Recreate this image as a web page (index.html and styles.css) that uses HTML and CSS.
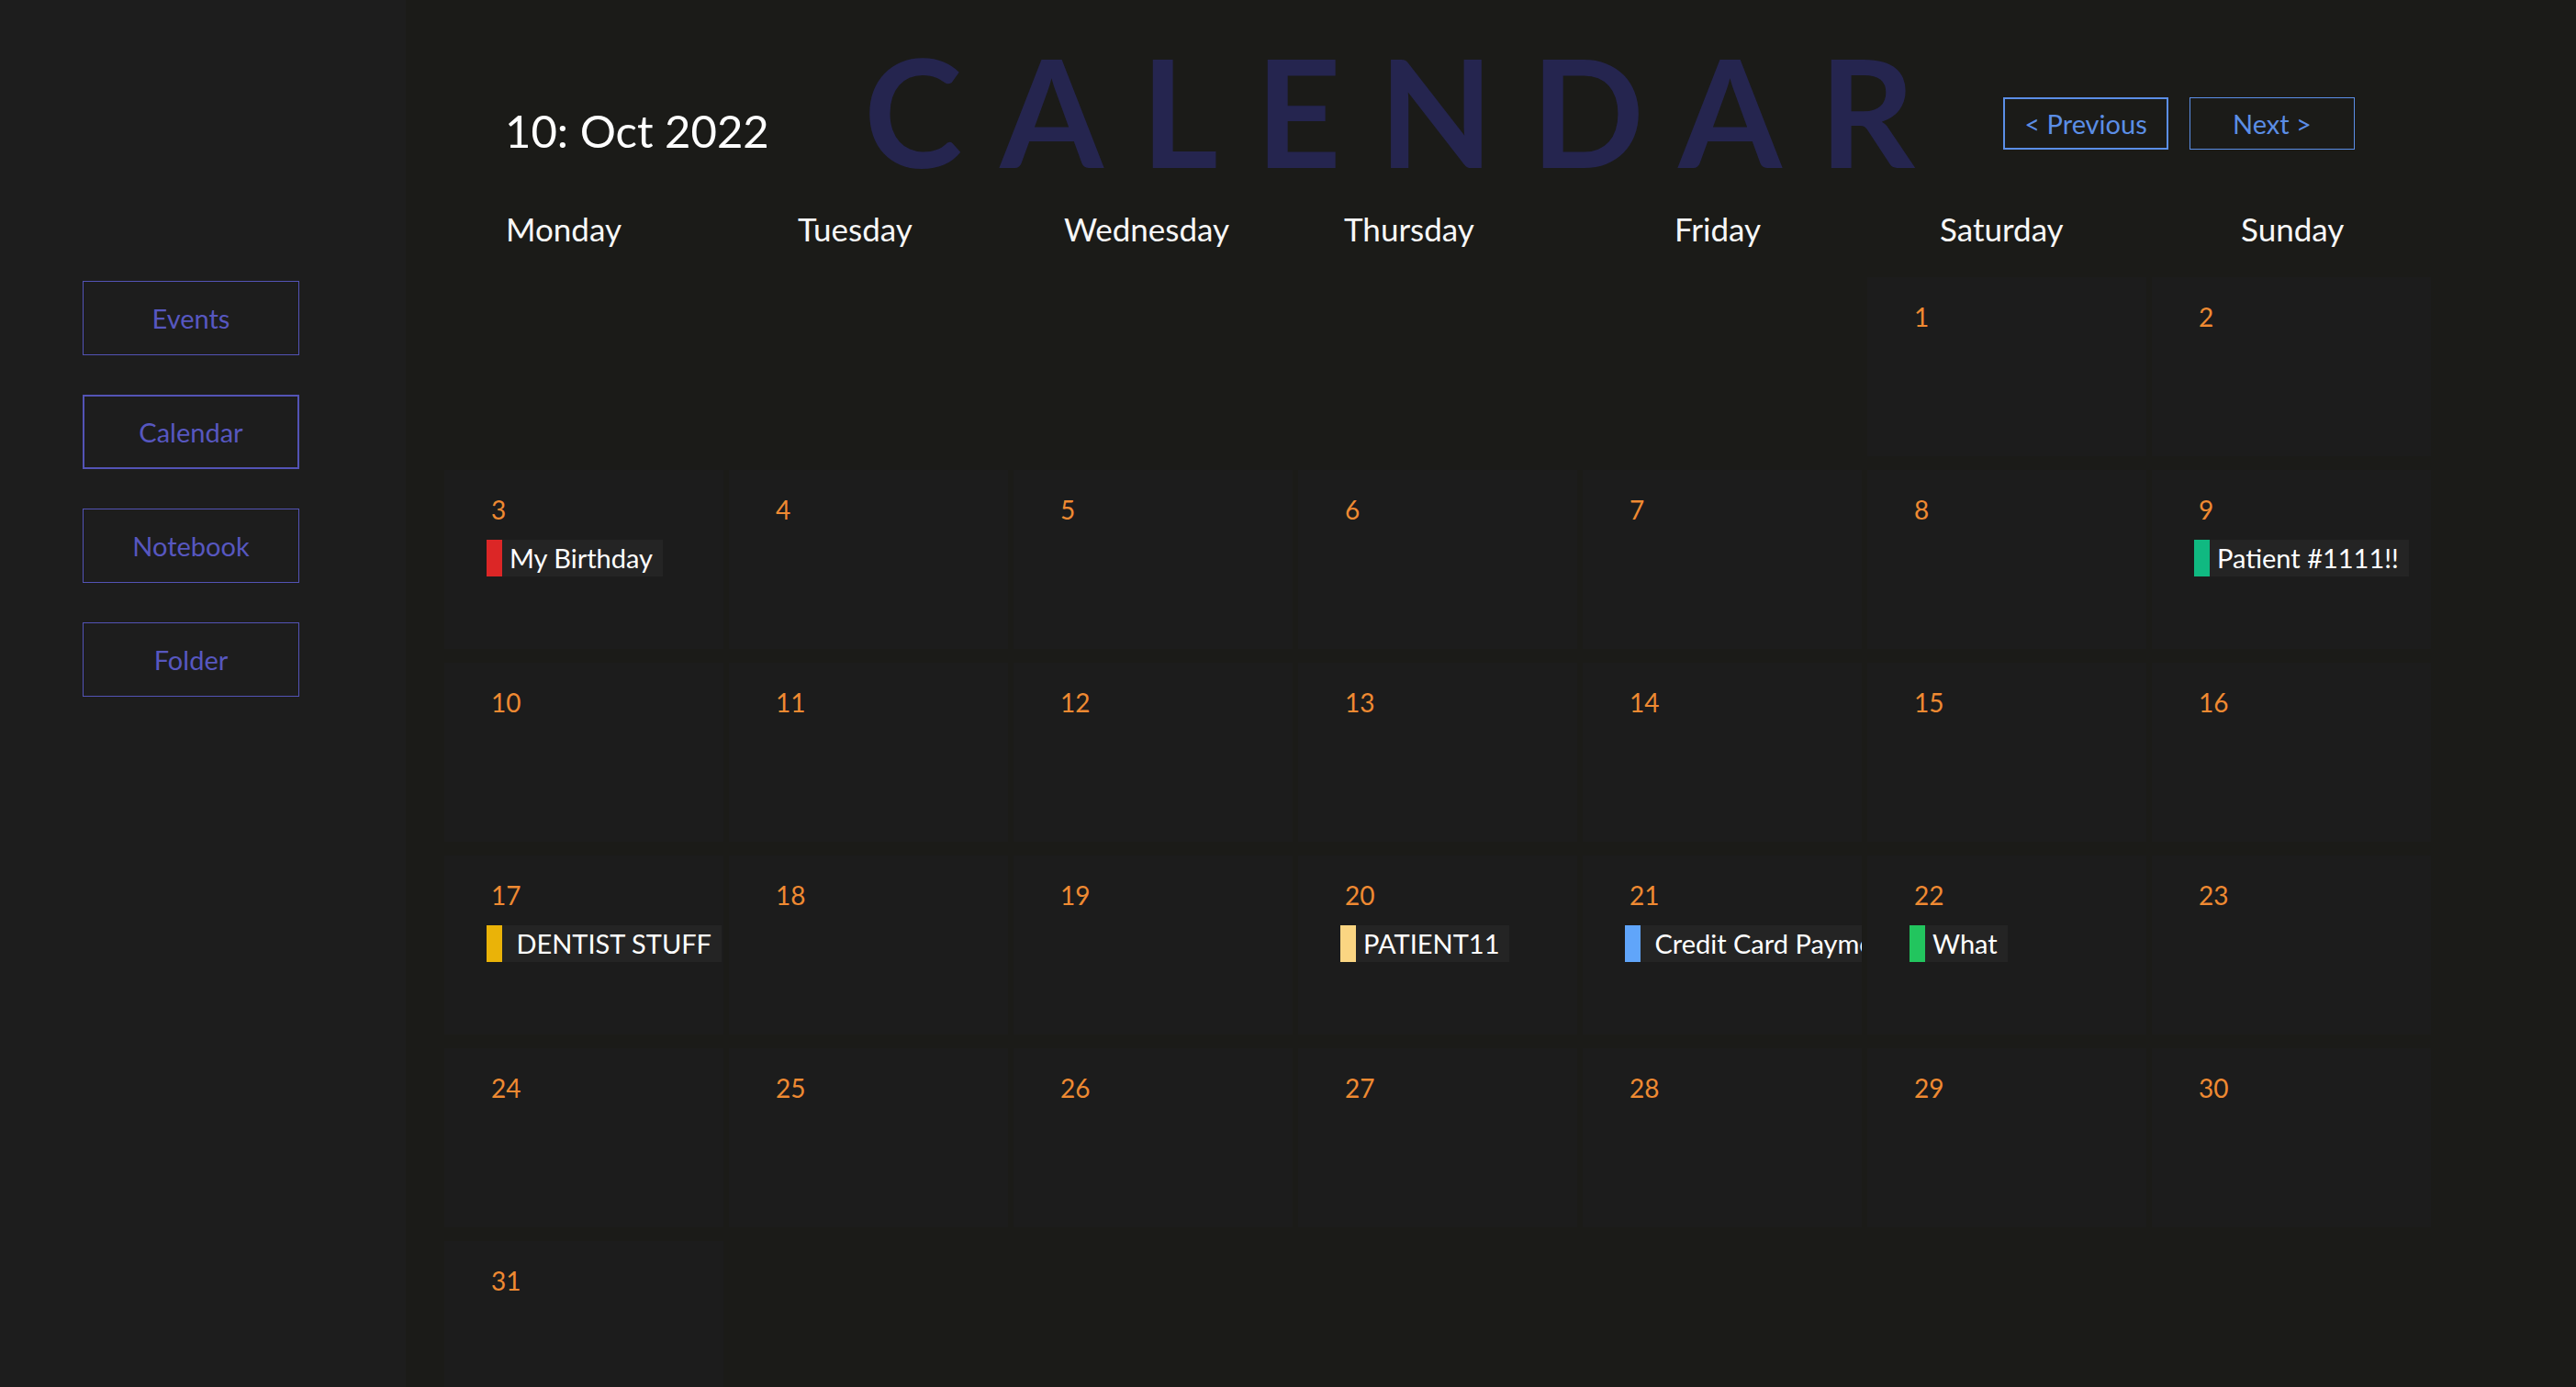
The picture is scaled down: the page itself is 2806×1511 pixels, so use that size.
FILE: index.html
```html
<!DOCTYPE html>
<html lang="en">
<head>
<meta charset="utf-8">
<title>Calendar</title>
<link rel="stylesheet" href="styles.css">
</head>
<body>
<div class="app">
  <aside class="sidebar">
    <button class="nav-btn">Events</button>
    <button class="nav-btn active">Calendar</button>
    <button class="nav-btn">Notebook</button>
    <button class="nav-btn">Folder</button>
  </aside>
  <main class="main">
    <header class="topbar">
      <div class="month">10: Oct 2022</div>
      <div class="brand">CALENDAR</div>
      <div class="pager">
        <button class="pager-btn focused">&lt; Previous</button>
        <button class="pager-btn">Next &gt;</button>
      </div>
    </header>
    <div class="weekdays">
      <div class="wd">Monday</div>
      <div class="wd">Tuesday</div>
      <div class="wd">Wednesday</div>
      <div class="wd">Thursday</div>
      <div class="wd">Friday</div>
      <div class="wd">Saturday</div>
      <div class="wd">Sunday</div>
    </div>
    <div class="grid">
      <div class="blank"></div>
      <div class="blank"></div>
      <div class="blank"></div>
      <div class="blank"></div>
      <div class="blank"></div>
      <div class="cell"><div class="num">1</div></div>
      <div class="cell"><div class="num">2</div></div>

      <div class="cell"><div class="num">3</div><div class="event"><span class="bar red"></span><span class="label">My Birthday</span></div></div>
      <div class="cell"><div class="num">4</div></div>
      <div class="cell"><div class="num">5</div></div>
      <div class="cell"><div class="num">6</div></div>
      <div class="cell"><div class="num">7</div></div>
      <div class="cell"><div class="num">8</div></div>
      <div class="cell"><div class="num">9</div><div class="event"><span class="bar emerald"></span><span class="label">Patient #1111!!</span></div></div>

      <div class="cell"><div class="num">10</div></div>
      <div class="cell"><div class="num">11</div></div>
      <div class="cell"><div class="num">12</div></div>
      <div class="cell"><div class="num">13</div></div>
      <div class="cell"><div class="num">14</div></div>
      <div class="cell"><div class="num">15</div></div>
      <div class="cell"><div class="num">16</div></div>

      <div class="cell"><div class="num">17</div><div class="event"><span class="bar yellow"></span><span class="label"> DENTIST STUFF</span></div></div>
      <div class="cell"><div class="num">18</div></div>
      <div class="cell"><div class="num">19</div></div>
      <div class="cell"><div class="num">20</div><div class="event"><span class="bar amber"></span><span class="label">PATIENT11</span></div></div>
      <div class="cell"><div class="num">21</div><div class="event"><span class="bar blue"></span><span class="label"> Credit Card Payment</span></div></div>
      <div class="cell"><div class="num">22</div><div class="event"><span class="bar green"></span><span class="label">What</span></div></div>
      <div class="cell"><div class="num">23</div></div>

      <div class="cell"><div class="num">24</div></div>
      <div class="cell"><div class="num">25</div></div>
      <div class="cell"><div class="num">26</div></div>
      <div class="cell"><div class="num">27</div></div>
      <div class="cell"><div class="num">28</div></div>
      <div class="cell"><div class="num">29</div></div>
      <div class="cell"><div class="num">30</div></div>

      <div class="cell"><div class="num">31</div></div>
    </div>
  </main>
</div>
</body>
</html>
```
FILE: styles.css
```css
* { box-sizing: border-box; }

html, body {
  margin: 0;
  padding: 0;
  background: #1b1b18;
  font-family: Lato, "Noto Sans", sans-serif;
}

.app {
  display: flex;
  min-height: 100vh;
}

.sidebar {
  width: 442px;
  flex: none;
  background: #1d1d1d;
  padding: 306px 0 0 90px;
  display: flex;
  flex-direction: column;
  align-items: flex-start;
  gap: 43px;
}

.nav-btn {
  width: 236px;
  height: 81px;
  background: transparent;
  border: 1px solid #5353b5;
  color: #5757c0;
  font-family: Lato, "Noto Sans", sans-serif;
  font-size: 29px;
  padding: 0;
}

.nav-btn.active {
  border-width: 2px;
}

.main {
  flex: 1;
  padding-left: 42px;
}

.topbar {
  display: grid;
  grid-template-columns: 457px 1241px auto;
  align-items: start;
  height: 232px;
}

.month {
  padding-left: 66px;
  margin-top: 118px;
  font-size: 49px;
  line-height: 1;
  color: #ffffff;
  white-space: nowrap;
}

.brand {
  margin-top: 40px;
  font-size: 162px;
  font-weight: 700;
  line-height: 1;
  letter-spacing: 41px;
  color: #25254f;
  white-space: nowrap;
}

.pager {
  display: flex;
  gap: 23px;
  margin-top: 106px;
}

.pager-btn {
  width: 180px;
  height: 57px;
  background: transparent;
  border: 1px solid #5b8ee6;
  color: #5b8ee6;
  font-family: Lato, "Noto Sans", sans-serif;
  font-size: 29px;
  padding: 0;
}

.pager-btn.focused {
  border-width: 2px;
}

.weekdays {
  display: grid;
  grid-template-columns: repeat(7, 304px);
  column-gap: 6px;
  height: 70px;
  font-size: 35px;
  line-height: 1;
  color: #f7f7f7;
}

.wd:nth-child(1) { padding-left: 67px; }
.wd:nth-child(2) { padding-left: 75px; }
.wd:nth-child(3) { padding-left: 55px; }
.wd:nth-child(4) { padding-left: 50px; }
.wd:nth-child(5) { padding-left: 100px; }
.wd:nth-child(6) { padding-left: 79px; }
.wd:nth-child(7) { padding-left: 97px; }

.grid {
  display: grid;
  grid-template-columns: repeat(7, 304px);
  grid-auto-rows: 195px;
  column-gap: 6px;
  row-gap: 15px;
}

.cell {
  background: #1c1c1c;
  padding: 29px 0 0 46px;
  overflow: hidden;
}

.num {
  color: #ef8a32;
  font-size: 28px;
  line-height: 1;
  padding-left: 5px;
}

.event {
  display: inline-flex;
  margin-top: 19px;
  height: 40px;
  white-space: nowrap;
}

.bar {
  width: 17px;
  flex: none;
}

.label {
  background: #242424;
  padding: 0 11px 0 8px;
  font-size: 29px;
  line-height: 40px;
  color: #ffffff;
  white-space: pre;
  flex: none;
}

.red { background: #dc2626; }
.emerald { background: #10b981; }
.yellow { background: #eab308; }
.amber { background: #fad582; }
.blue { background: #60a5fa; }
.green { background: #22c55e; }
```
